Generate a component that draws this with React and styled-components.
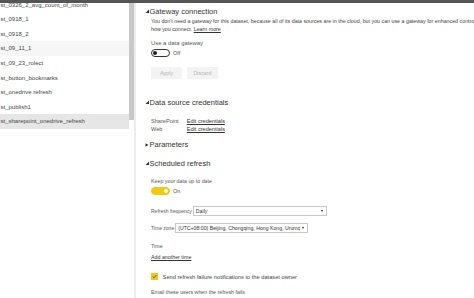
import React from 'react';
import styled, { createGlobalStyle } from 'styled-components';

const GlobalStyle = createGlobalStyle`
    html, body {
        margin: 0;
        padding: 0;
        background: #fff;
        overflow: hidden;
    }
    body {
        font-family: "Liberation Sans", Arial, sans-serif;
        color: #444;
    }
`;

const Page = styled.div`
    width: 474px;
    height: 298px;
    display: flex;
    flex-direction: column;
    overflow: hidden;
    background: #fff;
`;

const TopBar = styled.div`
    flex: none;
    height: 3px;
    background: #555555;
`;

const Body = styled.div`
    flex: 1;
    display: flex;
    min-height: 0;
`;

const Sidebar = styled.aside`
    flex: none;
    width: 129px;
    overflow: hidden;
`;

const FileList = styled.ul`
    list-style: none;
    margin: -5.3px 0 0;
    padding: 0;
`;

const FileRow = styled.li`
    height: 14.6px;
    line-height: 14.6px;
    padding-left: 0.5px;
    font-size: 6px;
    color: #444;
    white-space: nowrap;
    background: ${p => (p.$selected ? '#e6e6e6' : p.$hover ? '#f6f6f6' : 'transparent')};
`;

const ScrollTrack = styled.div`
    flex: none;
    width: 5px;
`;

const ScrollThumb = styled.div`
    height: 117px;
    background: #c8c8c8;
`;

const Divider = styled.div`
    flex: none;
    width: 2px;
    background: #ededed;
`;

const Content = styled.main`
    flex: 1;
    min-width: 0;
    padding-left: 9px;
    overflow: hidden;
`;

const SectionTitle = styled.h2`
    margin: ${p => p.$mt}px 0 0;
    display: flex;
    align-items: center;
    gap: 0.5px;
    font-size: 7.5px;
    font-weight: normal;
    line-height: 11px;
    color: #333;
    white-space: nowrap;
`;

const SectionBody = styled.div`
    padding-left: 6px;
`;

const Paragraph = styled.p`
    margin: 0;
    width: 340px;
    font-size: 5.3px;
    line-height: 8.8px;
    color: #444;
    white-space: nowrap;
`;

const Link = styled.a`
    color: #333;
    text-decoration: underline;
    cursor: pointer;
`;

const Label = styled.div`
    margin-top: ${p => p.$mt}px;
    font-size: ${p => p.$size || 5.3}px;
    line-height: 8px;
    color: #555;
    white-space: nowrap;
`;

const ToggleRow = styled.div`
    margin-top: ${p => p.$mt}px;
    display: flex;
    align-items: center;
    gap: 3px;
    height: 8px;
    font-size: 5.5px;
    color: #555;
`;

const Switch = styled.span`
    box-sizing: border-box;
    width: 19px;
    height: 8px;
    border-radius: 4px;
    border: 1px solid ${p => (p.$on ? '#f2c811' : '#333')};
    background: ${p => (p.$on ? '#f2c811' : '#fff')};
    display: flex;
    align-items: center;
    justify-content: ${p => (p.$on ? 'flex-end' : 'flex-start')};
    padding: 0 1px;
    &::after {
        content: '';
        width: 4px;
        height: 4px;
        border-radius: 50%;
        background: ${p => (p.$on ? '#fff' : '#222')};
    }
`;

const ButtonRow = styled.div`
    margin-top: 10px;
    display: flex;
    gap: 5px;
`;

const Button = styled.button`
    width: 31px;
    height: 12px;
    padding: 0;
    border: none;
    background: #f3f3f3;
    color: #b4b4b4;
    font: 5.3px "Liberation Sans", Arial, sans-serif;
`;

const CredGrid = styled.div`
    margin-top: 8.7px;
    display: grid;
    grid-template-columns: 35.7px auto;
    grid-auto-rows: 8.3px;
    align-items: center;
    font-size: 5.6px;
    color: #555;
`;

const FieldRow = styled.div`
    margin-top: ${p => p.$mt}px;
    display: flex;
    align-items: center;
    gap: 1px;
    height: 10px;
    font-size: 5px;
    color: #555;
`;

const Select = styled.div`
    box-sizing: border-box;
    width: ${p => p.$w}px;
    height: 10px;
    border: 1px solid #c9c9c9;
    display: flex;
    align-items: center;
    gap: 2px;
    padding: 0 3px 0 2px;
    font-size: 5.2px;
    color: #333;
    &::after {
        content: '';
        flex: none;
        border-left: 1.5px solid transparent;
        border-right: 1.5px solid transparent;
        border-top: 2.5px solid #222;
    }
`;

const SelectValue = styled.span`
    flex: 1;
    min-width: 0;
    overflow: hidden;
    white-space: nowrap;
`;

const CheckRow = styled.label`
    margin-top: 12px;
    display: flex;
    align-items: center;
    gap: 4.6px;
    height: 8px;
    font-size: 5.7px;
    color: #444;
    white-space: nowrap;
`;

const CheckBox = styled.span`
    width: 7px;
    height: 7px;
    background: #f2c811;
    display: flex;
    align-items: center;
    justify-content: center;
`;

const Caret = ({ open }) => (
    <svg width="4" height="4" viewBox="0 0 4 4">
        {open ? <polygon points="4,0.5 4,4 0.5,4" fill="#333" /> : <polygon points="0.5,0.3 3.5,2 0.5,3.7" fill="#333" />}
    </svg>
);

const files = [
    'st_0326_2_avg_count_of_month',
    'st_0918_1',
    'st_0918_2',
    'st_09_11_1',
    'st_09_23_rolect',
    'st_button_bookmarks',
    'st_onedrive refresh',
    'st_publish1',
    'st_sharepoint_onedrive_refresh'
];

export default function App() {
    return (
        <Page>
            <GlobalStyle />
            <TopBar />
            <Body>
                <Sidebar>
                    <FileList>
                        {files.map((f, i) => (
                            <FileRow key={f} $hover={i === 3} $selected={i === 8}>
                                {f}
                            </FileRow>
                        ))}
                    </FileList>
                </Sidebar>
                <ScrollTrack>
                    <ScrollThumb />
                </ScrollTrack>
                <Divider />
                <Content>
                    <SectionTitle $mt={2.5}>
                        <Caret open />
                        Gateway connection
                    </SectionTitle>
                    <SectionBody>
                        <Paragraph>
                            You don't need a gateway for this dataset, because all of its data sources are in the cloud, but you can use a gateway for enhanced control over
                            <br />
                            how you connect. <Link>Learn more</Link>
                        </Paragraph>
                        <Label $mt={4.7} $size={5.9}>Use a data gateway</Label>
                        <ToggleRow $mt={2.2}>
                            <Switch />
                            Off
                        </ToggleRow>
                        <ButtonRow>
                            <Button>Apply</Button>
                            <Button>Discard</Button>
                        </ButtonRow>
                    </SectionBody>

                    <SectionTitle $mt={17.8}>
                        <Caret open />
                        Data source credentials
                    </SectionTitle>
                    <SectionBody>
                        <CredGrid>
                            <span>SharePoint</span>
                            <Link>Edit credentials</Link>
                            <span>Web</span>
                            <Link>Edit credentials</Link>
                        </CredGrid>
                    </SectionBody>

                    <SectionTitle $mt={6.3}>
                        <Caret />
                        Parameters
                    </SectionTitle>

                    <SectionTitle $mt={7.3}>
                        <Caret open />
                        Scheduled refresh
                    </SectionTitle>
                    <SectionBody>
                        <Label $mt={8.5}>Keep your data up to date</Label>
                        <ToggleRow $mt={2}>
                            <Switch $on />
                            On
                        </ToggleRow>
                        <FieldRow $mt={10.7}>
                            Refresh frequency
                            <Select $w={134}>
                                <SelectValue>Daily</SelectValue>
                            </Select>
                        </FieldRow>
                        <FieldRow $mt={7}>
                            Time zone
                            <Select $w={133}>
                                <SelectValue>(UTC+08:00) Beijing, Chongqing, Hong Kong, Urumqi</SelectValue>
                            </Select>
                        </FieldRow>
                        <Label $mt={8.7}>Time</Label>
                        <Label $mt={3}>
                            <Link>Add another time</Link>
                        </Label>
                        <CheckRow>
                            <CheckBox>
                                <svg width="5" height="5" viewBox="0 0 5 5">
                                    <polyline points="0.8,2.6 2,3.8 4.2,1.2" fill="none" stroke="#333" strokeWidth="0.8" />
                                </svg>
                            </CheckBox>
                            Send refresh failure notifications to the dataset owner
                        </CheckRow>
                        <Label $mt={7.6}>Email these users when the refresh fails</Label>
                    </SectionBody>
                </Content>
            </Body>
        </Page>
    );
}
